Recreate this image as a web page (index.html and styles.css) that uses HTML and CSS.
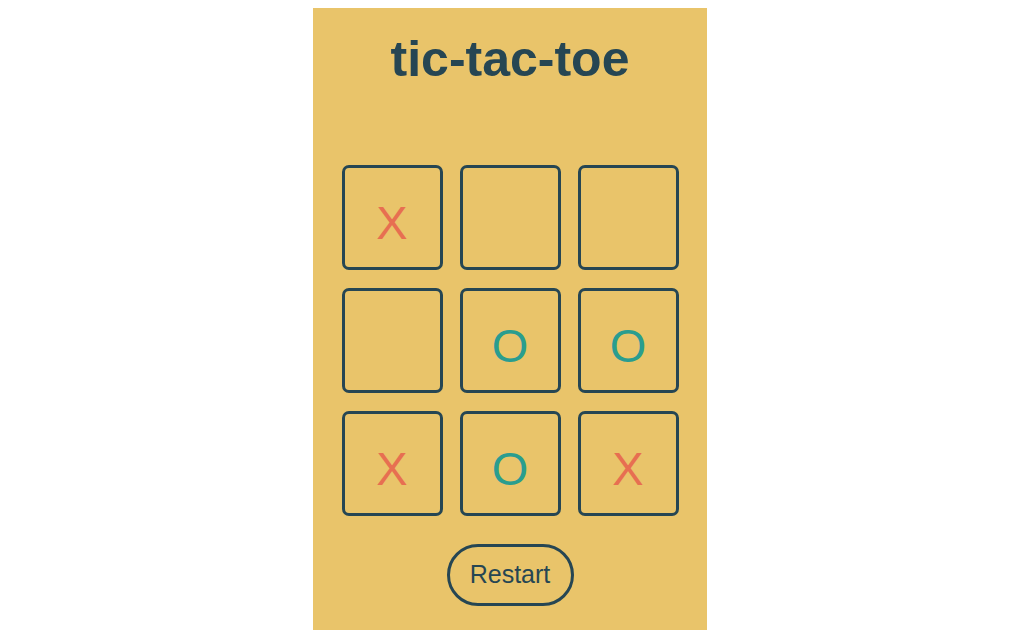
FILE: index.html
```html
<!DOCTYPE html>
<html lang="en">
<head>
    <meta charset="UTF-8">
    <meta name="viewport" content="width=device-width, initial-scale=1.0">
    <title>tic-tac-toe</title>
    <link rel="stylesheet" href="styles.css">
</head>
<body>
    <div class="game">
        <h1>tic-tac-toe</h1>

        <div class="board">
            <div class="cell x">X</div>
            <div class="cell"></div>
            <div class="cell"></div>
            <div class="cell"></div>
            <div class="cell o">O</div>
            <div class="cell o">O</div>
            <div class="cell x">X</div>
            <div class="cell o">O</div>
            <div class="cell x">X</div>
        </div>

        <button class="restart">Restart</button>
    </div>
</body>
</html>
```

FILE: styles.css
```css
:root {
    --dark: #264653;
    --teal: #2a9d8f;
    --sand: #e9c46a;
    --coral: #e76f51;
}

* {
    margin: 0;
    padding: 0;
    box-sizing: border-box;
}

body {
    font-family: "Liberation Sans", Arial, sans-serif;
    background: #ffffff;
    padding: 8px 0;
}

.game {
    width: 394px;
    height: 622px;
    margin: 0 auto;
    padding-top: 23px;
    background: var(--sand);
    display: flex;
    flex-direction: column;
    align-items: center;
}

h1 {
    font-size: 50px;
    font-weight: bold;
    line-height: 1.15;
    color: var(--dark);
}

.board {
    margin-top: 76px;
    display: grid;
    grid-template-columns: repeat(3, 101px);
    grid-auto-rows: 105px;
    column-gap: 17px;
    row-gap: 18px;
}

.cell {
    border: 3px solid var(--dark);
    border-radius: 7px;
    padding-top: 10px;
    display: flex;
    align-items: center;
    justify-content: center;
    font-size: 47px;
    cursor: pointer;
}

.cell.x {
    color: var(--coral);
}

.cell.o {
    color: var(--teal);
}

.restart {
    margin-top: 28px;
    width: 127px;
    height: 62px;
    border: 3px solid var(--dark);
    border-radius: 31px;
    background: transparent;
    font-family: inherit;
    font-size: 25px;
    color: var(--dark);
    cursor: pointer;
}
```
